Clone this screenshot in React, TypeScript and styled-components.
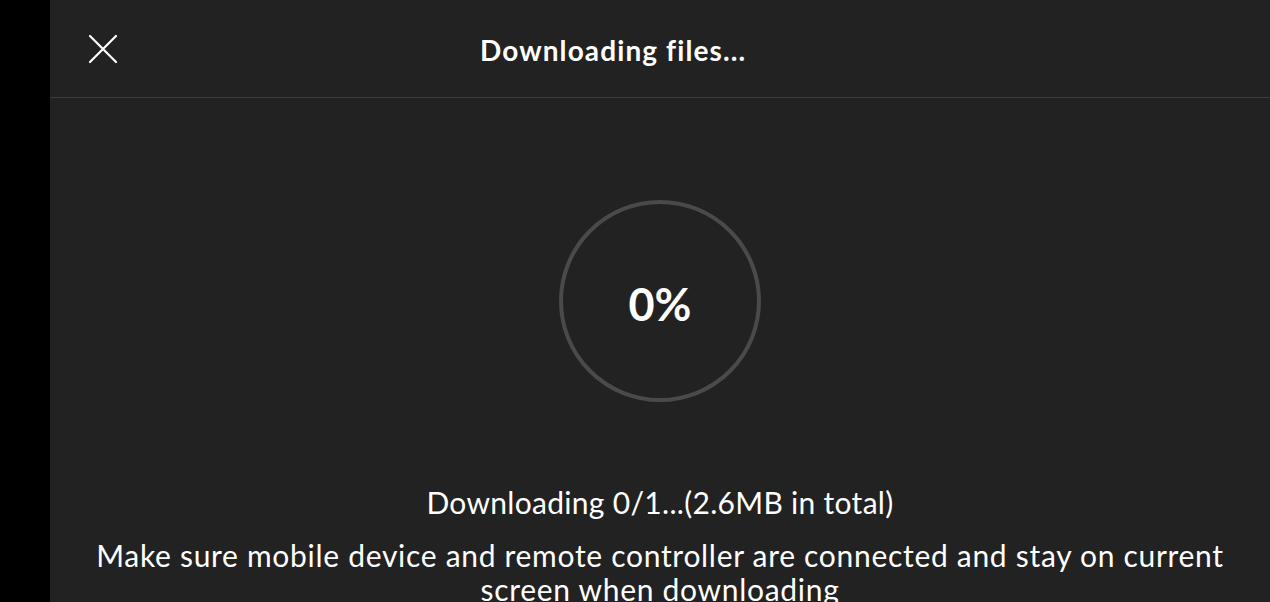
import React from "react";
import styled, { createGlobalStyle } from "styled-components";

const Global = createGlobalStyle`
  html, body { margin: 0; padding: 0; background: #000; }
  body { width: 1270px; height: 602px; overflow: hidden; font-family: Lato, "Noto Sans", sans-serif; }
`;

const Screen = styled.div`
  display: flex;
  width: 1270px;
  height: 602px;
  overflow: hidden;
`;

const Strip = styled.div`
  width: 50px;
  flex: none;
  background: #000;
`;

const Panel = styled.div`
  flex: 1;
  display: flex;
  flex-direction: column;
  background: #222222;
  color: #fff;
`;

const Header = styled.header`
  height: 97px;
  flex: none;
  display: flex;
  align-items: center;
  border-bottom: 1px solid #3a3a3a;
  padding-left: 38px;
  box-sizing: content-box;
`;

const CloseButton = styled.button`
  width: 30px;
  height: 30px;
  padding: 0;
  border: 0;
  background: none;
  display: flex;
  align-items: center;
  justify-content: center;
  cursor: pointer;
`;

const Title = styled.h1`
  margin: 2px 0 0 362px;
  font-size: 28px;
  font-weight: 700;
  letter-spacing: 1.1px;
  color: #fff;
  line-height: 1;
`;

const Body = styled.main`
  flex: 1;
  display: flex;
  flex-direction: column;
  align-items: center;
`;

const Ring = styled.div`
  margin-top: 102px;
  width: 194px;
  height: 194px;
  border: 4px solid #4a4a4a;
  border-radius: 50%;
  display: flex;
  align-items: center;
  justify-content: center;
`;

const Percent = styled.span`
  font-size: 45px;
  font-weight: 700;
  color: #fff;
  line-height: 1;
  margin-top: 6px;
`;

const Status = styled.p`
  margin: 82px 0 0;
  font-size: 30px;
  line-height: 36px;
  letter-spacing: 0.3px;
  color: #fff;
  text-align: center;
`;

const Hint = styled.p`
  margin: 18px 30px 0;
  font-size: 30px;
  line-height: 34px;
  letter-spacing: 0.7px;
  color: #fff;
  text-align: center;
`;

export default function App() {
  return (
    <>
      <Global />
      <Screen>
        <Strip />
        <Panel>
          <Header>
            <CloseButton aria-label="Close">
              <svg width="30" height="30" viewBox="0 0 30 30">
                <path d="M2 2 L28 28 M28 2 L2 28" stroke="#fff" strokeWidth="2.2" strokeLinecap="round" />
              </svg>
            </CloseButton>
            <Title>Downloading files...</Title>
          </Header>
          <Body>
            <Ring>
              <Percent>0%</Percent>
            </Ring>
            <Status>Downloading 0/1...(2.6MB in total)</Status>
            <Hint>
              Make sure mobile device and remote controller are connected and stay on current screen when downloading
            </Hint>
          </Body>
        </Panel>
      </Screen>
    </>
  );
}
